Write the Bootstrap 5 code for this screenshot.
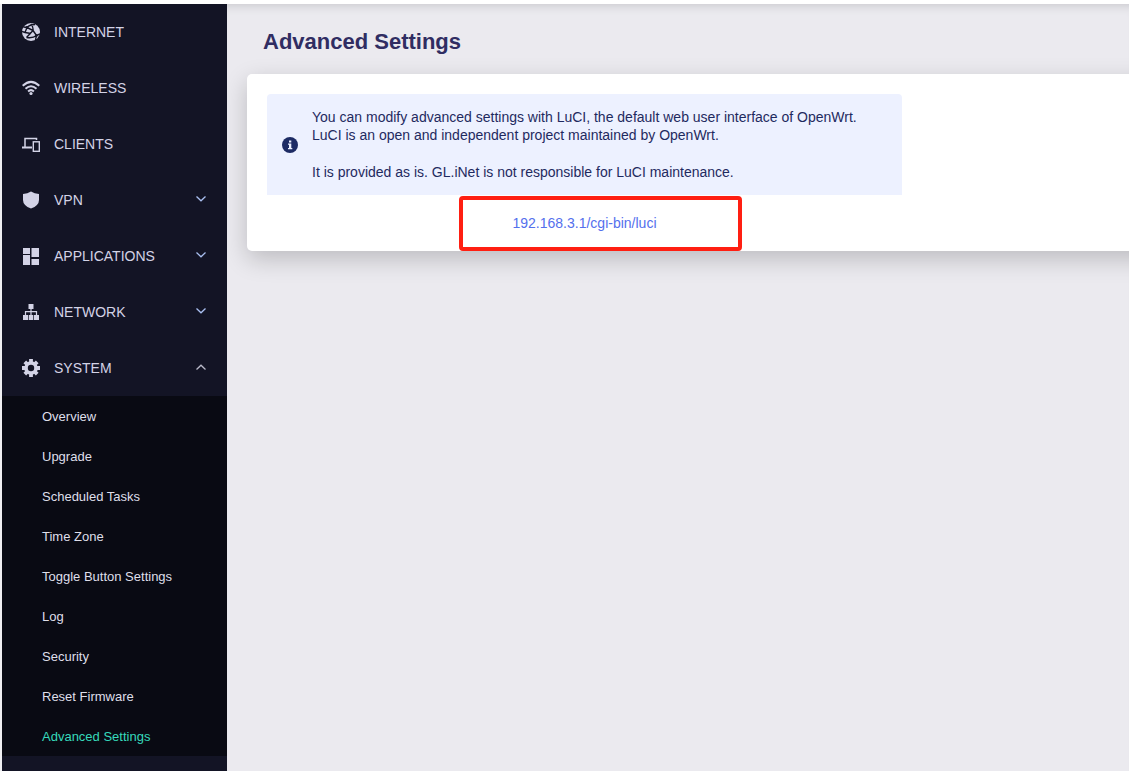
<!DOCTYPE html>
<html lang="en">
<head>
<meta charset="utf-8">
<meta name="viewport" content="width=device-width, initial-scale=1">
<title>Advanced Settings</title>
<link rel="stylesheet" href="https://cdn.jsdelivr.net/npm/bootstrap@5.3.0/dist/css/bootstrap.min.css">
<style>
  body { font-family: "Liberation Sans", Arial, sans-serif; font-size: 14px; line-height: 18px; background: #fff; }
  .shell { border-left: 2px solid #efeff2; }
  .side-nav { width: 225px; background: #131425; }
  .side-nav .nav-link { color: #d3d3e6; background: none; border: 0; }
  .main-link { height: 56px; padding: 0 20px; gap: 14px; font-size: 14px; }
  .main-link .glyph { width: 18px; height: 18px; flex: none; }
  .main-link .caret { width: 12px; height: 12px; margin-left: auto; }
  .sub-nav { background: #090a13; }
  .sub-nav .nav-link { height: 40px; padding: 2px 40px 0; font-size: 13px; color: #dfdfea; }
  .sub-nav .nav-link.active { color: #36d9bb; }
  .content { background: #ebeaef; box-shadow: inset 0 10px 10px -8px #c9c9ce; padding: 20px 0 20px 20px; overflow: hidden; }
  .page-title { font-size: 22px; line-height: 36px; font-weight: 700; color: #302d62; margin: 0 0 14px 16px; }
  .panel { border: 0; border-radius: 5px; margin-right: -40px; padding: 20px 60px 0 20px; box-shadow: 0 8px 24px rgba(0,0,0,.2); }
  .panel-inner { max-width: 635px; }
  .notice { background: #edf1ff; color: #1f2a60; padding: 14px 15px; gap: 14px; border-radius: 4px 4px 0 0; }
  .notice svg { width: 16px; height: 16px; flex: none; }
  .notice p { margin: 0 0 19px; }
  .link-row { height: 56px; }
  .link-row a { color: #5470ed; text-decoration: none; }
  .highlight { left: 192px; right: 160px; top: 1px; bottom: 0; border: 4px solid #ff1f12; border-radius: 4px; pointer-events: none; }
</style>
</head>
<body>
<div class="min-vh-100 d-flex flex-column pt-1">
<div class="shell d-flex flex-grow-1">
  <nav class="side-nav flex-shrink-0" aria-label="Main menu">
    <ul class="nav flex-column">
      <li><a href="#" class="nav-link main-link d-flex align-items-center">
        <svg class="glyph" viewBox="0 0 18 18"><circle cx="9" cy="9" r="9" fill="#d3d3e6"/><g fill="none" stroke="#131425" stroke-width="1.4"><path d="M1.500 4 5 4.500Q8 1.500 13 1.500M5 4.500 3 9.500M5 4.500 11 7.500M0 8.500 3 9.500 9 10.500M11 7.500Q11.500 4 9 1M11 7.500 4.500 14.500M11 7.500 14.500 12.500M14.500 12.500 18 11M14.500 12.500Q11 15.500 4.500 14.500M14.500 12.500 13.500 17"/></g><g fill="#131425"><circle cx="5" cy="4.500" r="1.400"/><circle cx="14.500" cy="12.500" r="1.300"/></g></svg>
        <span>INTERNET</span></a></li>
      <li><a href="#" class="nav-link main-link d-flex align-items-center">
        <svg class="glyph" viewBox="0 0 18 18" fill="none" stroke="#d3d3e6" stroke-width="2"><path d="M.7 6.800Q9 -1 17.300 6.800M3.500 9.700Q9 4.700 14.500 9.700M6.100 12.400Q9 9.800 11.900 12.400"/><circle cx="9" cy="14.500" r="1.600" fill="#d3d3e6" stroke="none"/></svg>
        <span>WIRELESS</span></a></li>
      <li><a href="#" class="nav-link main-link d-flex align-items-center">
        <svg class="glyph" viewBox="0 0 18 18" fill="none" stroke="#d3d3e6"><path d="M3 13V3.500H14.500V5" stroke-width="1.500"/><path d="M0 12.500H10" stroke-width="2"/><rect x="11.300" y="6.800" width="6" height="9.500" stroke-width="1.400"/></svg>
        <span>CLIENTS</span></a></li>
      <li><button type="button" class="nav-link main-link d-flex align-items-center w-100" aria-expanded="false">
        <svg class="glyph" viewBox="0 0 18 18" fill="#d3d3e6"><path d="M9 .5Q12.500 2.700 17 3V9Q17 14.500 9 17.600Q1 14.500 1 9V3Q5.500 2.700 9 .5Z"/></svg>
        <span>VPN</span>
        <svg class="caret" viewBox="0 0 12 12" fill="none" stroke="#a9bff0" stroke-width="1.300"><path d="M1.500 2.500 6 6.800l4.500-4.300"/></svg></button></li>
      <li><button type="button" class="nav-link main-link d-flex align-items-center w-100" aria-expanded="false">
        <svg class="glyph" viewBox="0 0 18 18" fill="#d3d3e6"><path d="M1 1H8V7H1ZM1 8H8V18H1ZM9.500 1H17V10H9.500ZM9.500 12H17V18H9.500Z"/></svg>
        <span>APPLICATIONS</span>
        <svg class="caret" viewBox="0 0 12 12" fill="none" stroke="#a9bff0" stroke-width="1.300"><path d="M1.500 2.500 6 6.800l4.500-4.300"/></svg></button></li>
      <li><button type="button" class="nav-link main-link d-flex align-items-center w-100" aria-expanded="false">
        <svg class="glyph" viewBox="0 0 18 18" fill="#d3d3e6"><path d="M6.500 1H11.500V6H6.500ZM1 12H6V17H1ZM6.700 12H11.300V17H6.700ZM12 12H17V17H12Z"/><path d="M9 6V12M3.500 12V8.700H14.500V12" fill="none" stroke="#d3d3e6" stroke-width="1.200"/></svg>
        <span>NETWORK</span>
        <svg class="caret" viewBox="0 0 12 12" fill="none" stroke="#a9bff0" stroke-width="1.300"><path d="M1.500 2.500 6 6.800l4.500-4.300"/></svg></button></li>
      <li><button type="button" class="nav-link main-link d-flex align-items-center w-100" aria-expanded="true" aria-controls="system-menu">
        <svg class="glyph" viewBox="0 0 18 18"><g stroke="#d3d3e6" stroke-width="3.800"><path d="M9 0V18M0 9H18M2.800 2.800 15.200 15.200M15.200 2.800 2.800 15.200"/></g><circle cx="9" cy="9" r="6.800" fill="#d3d3e6"/><circle cx="9" cy="9" r="3.200" fill="#131425"/></svg>
        <span>SYSTEM</span>
        <svg class="caret" viewBox="0 0 12 12" fill="none" stroke="#b9b9c9" stroke-width="1.300"><path d="M1.500 7.500 6 3.200l4.500 4.300"/></svg></button>
        <ul class="nav flex-column sub-nav" id="system-menu">
          <li><a href="#" class="nav-link d-flex align-items-center">Overview</a></li>
          <li><a href="#" class="nav-link d-flex align-items-center">Upgrade</a></li>
          <li><a href="#" class="nav-link d-flex align-items-center">Scheduled Tasks</a></li>
          <li><a href="#" class="nav-link d-flex align-items-center">Time Zone</a></li>
          <li><a href="#" class="nav-link d-flex align-items-center">Toggle Button Settings</a></li>
          <li><a href="#" class="nav-link d-flex align-items-center">Log</a></li>
          <li><a href="#" class="nav-link d-flex align-items-center">Security</a></li>
          <li><a href="#" class="nav-link d-flex align-items-center">Reset Firmware</a></li>
          <li><a href="#" class="nav-link d-flex align-items-center active" aria-current="page">Advanced Settings</a></li>
        </ul></li>
    </ul>
  </nav>
  <main class="content flex-grow-1">
    <h1 class="page-title">Advanced Settings</h1>
    <section class="card panel">
      <div class="panel-inner">
        <div class="notice d-flex align-items-center">
          <svg viewBox="0 0 16 16"><circle cx="8" cy="8" r="8" fill="#1d2b64"/><path d="M7 3.500H9.300V5.500H7ZM6 6.500H9.300V11H10.300V12.300H6V11H7V7.800H6Z" fill="#edf1ff"/></svg>
          <div>
            <p>You can modify advanced settings with LuCI, the default web user interface of OpenWrt.<br>LuCI is an open and independent project maintained by OpenWrt.</p>
            <p class="mb-0">It is provided as is. GL.iNet is not responsible for LuCI maintenance.</p>
          </div>
        </div>
        <div class="link-row position-relative d-flex align-items-center justify-content-center">
          <a href="#">192.168.3.1/cgi-bin/luci</a>
          <span class="highlight position-absolute"></span>
        </div>
      </div>
    </section>
  </main>
</div>
</div>
<script src="https://cdn.jsdelivr.net/npm/bootstrap@5.3.0/dist/js/bootstrap.bundle.min.js"></script>
</body>
</html>
